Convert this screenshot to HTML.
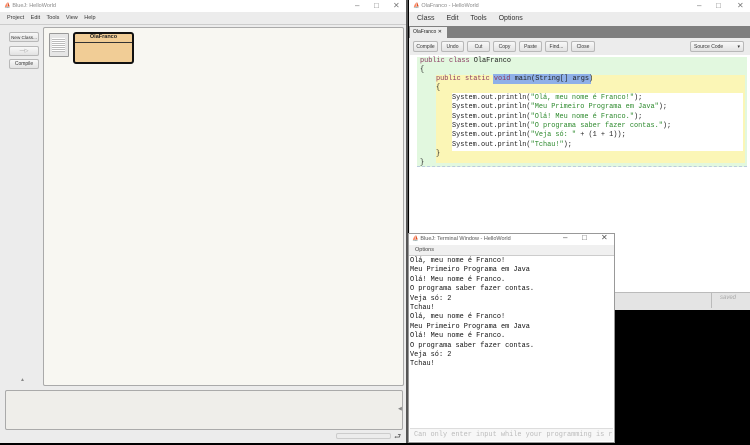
<!DOCTYPE html><html><head><style>
*{margin:0;padding:0;box-sizing:border-box}
body{width:750px;height:443px;position:relative;overflow:hidden;background:#000;font-family:"Liberation Sans",sans-serif;font-size:6px;color:#222}
.a{position:absolute;white-space:nowrap}
.btn{position:absolute;white-space:nowrap;border:1px solid #b8b8b8;background:linear-gradient(#f8f8f8,#e2e2e2);border-radius:2px;font-size:5px;text-align:center;line-height:9px;color:#333}
.mono{font-family:"Liberation Mono","DejaVu Sans Mono",monospace}
.code div{position:absolute;white-space:pre;font-size:6.9px;line-height:9.4px}
.k{color:#8b3a62}.s{color:#2d8a2d}
.ctl{position:absolute;font-size:8px;color:#777;white-space:nowrap}
</style></head><body>
<!-- left window -->
<div class="a" style="left:0;top:0;width:408px;height:443px;background:#ececec;border-right:2px solid #555"></div>
<div class="a" style="left:0;top:0;width:406px;height:12px;background:#fff"></div>
<div class="a" style="left:4px;top:3px;font-size:5.5px;color:#888">⛵ BlueJ: HelloWorld</div>
<div class="ctl" style="left:355px;top:1px">–</div><div class="ctl" style="left:374px;top:1px">□</div><div class="ctl" style="left:393px;top:1px">✕</div>
<div class="a" style="left:7px;top:15px;font-size:5.5px;color:#333;word-spacing:5px">Project Edit Tools View Help</div>
<div class="a" style="left:0;top:24px;width:406px;height:1px;background:#ccc"></div>
<div class="btn" style="left:9px;top:32px;width:30px;height:10px;font-size:4.6px">New Class...</div>
<div class="btn" style="left:9px;top:46px;width:30px;height:10px;color:#999">—▷</div>
<div class="btn" style="left:9px;top:59px;width:30px;height:10px">Compile</div>
<div class="a" style="left:20px;top:377px;font-size:5px;color:#888">▲</div>
<div class="a" style="left:43px;top:27px;width:361px;height:359px;background:#f8f7f2;border:1px solid #aaa;border-radius:2px"></div>
<div class="a" style="left:49px;top:33px;width:20px;height:24px;background:#e6e6e6;border:1px solid #999;border-radius:1px"></div>
<div class="a" style="left:52px;top:38px;width:13px;height:14px;background:repeating-linear-gradient(#fff 0 1px,#bbb 1px 2px)"></div>
<div class="a" style="left:73px;top:32px;width:61px;height:32px;background:#f1cd96;border:2px solid #111;border-radius:3px"></div>
<div class="a" style="left:75px;top:42px;width:57px;height:1px;background:#333"></div>
<div class="a" style="left:73px;top:34px;width:61px;text-align:center;font-size:5.5px;font-weight:bold">OlaFranco</div>
<div class="a" style="left:5px;top:390px;width:398px;height:40px;background:#efeeea;border:1px solid #aaa;border-radius:2px"></div>
<div class="a" style="left:398px;top:406px;font-size:5px;color:#888">◀</div>
<div class="a" style="left:336px;top:433px;width:55px;height:6px;border:1px solid #ccc;border-radius:2px"></div>
<div class="a" style="left:394px;top:431px;font-size:8px;color:#666">⮐</div>
<!-- editor window -->
<div class="a" style="left:409px;top:0;width:341px;height:310px;background:#ececec"></div>
<div class="a" style="left:409px;top:0;width:341px;height:12px;background:#fff"></div>
<div class="a" style="left:413px;top:3px;font-size:5.5px;color:#888">⛵ OlaFranco - HelloWorld</div>
<div class="ctl" style="left:697px;top:1px">–</div><div class="ctl" style="left:716px;top:1px">□</div><div class="ctl" style="left:737px;top:1px">✕</div>
<div class="a" style="left:417px;top:15px;font-size:7px;color:#333;word-spacing:10px">Class Edit Tools Options</div>
<div class="a" style="left:409px;top:26px;width:341px;height:12px;background:#7f7f7f"></div>
<div class="a" style="left:410px;top:27px;width:37px;height:11px;background:#ececec;font-size:5px;line-height:11px;padding-left:3px">OlaFranco ✕</div>
<div class="btn" style="left:413px;top:41px;width:25px;height:11px;line-height:10px">Compile</div>
<div class="btn" style="left:441px;top:41px;width:23px;height:11px;line-height:10px">Undo</div>
<div class="btn" style="left:467px;top:41px;width:23px;height:11px;line-height:10px">Cut</div>
<div class="btn" style="left:493px;top:41px;width:23px;height:11px;line-height:10px">Copy</div>
<div class="btn" style="left:519px;top:41px;width:23px;height:11px;line-height:10px">Paste</div>
<div class="btn" style="left:545px;top:41px;width:23px;height:11px;line-height:10px">Find...</div>
<div class="btn" style="left:571px;top:41px;width:24px;height:11px;line-height:10px">Close</div>
<div class="btn" style="left:690px;top:41px;width:54px;height:11px;line-height:10px;text-align:left;padding-left:3px">Source Code <span style="float:right;padding-right:3px">▾</span></div>
<div class="a" style="left:410px;top:55px;width:340px;height:237px;background:#fff"></div>
<div class="a" style="left:417px;top:57px;width:330px;height:110px;background:#e2f8df;border-bottom:1px dashed #bcd"></div>
<div class="a" style="left:436px;top:75px;width:309px;height:88px;background:#fbf6b6"></div>
<div class="a" style="left:452px;top:93px;width:291px;height:58px;background:#fff"></div>
<div class="a" style="left:493px;top:74px;width:98px;height:10px;background:#8fb0e8"></div>
<div class="code mono">
<div style="left:420px;top:57px"><span class="k">public class</span> OlaFranco</div>
<div style="left:420px;top:66px">{</div>
<div style="left:436px;top:75px"><span class="k">public static void</span> main(String[] args)</div>
<div style="left:436px;top:84px">{</div>
<div style="left:452px;top:94px">System.out.println(<span class="s">"Olá, meu nome é Franco!"</span>);</div>
<div style="left:452px;top:103px">System.out.println(<span class="s">"Meu Primeiro Programa em Java"</span>);</div>
<div style="left:452px;top:113px">System.out.println(<span class="s">"Olá! Meu nome é Franco."</span>);</div>
<div style="left:452px;top:122px">System.out.println(<span class="s">"O programa saber fazer contas."</span>);</div>
<div style="left:452px;top:131px">System.out.println(<span class="s">"Veja só: "</span> + (1 + 1));</div>
<div style="left:452px;top:141px">System.out.println(<span class="s">"Tchau!"</span>);</div>
<div style="left:436px;top:150px">}</div>
<div style="left:420px;top:159px">}</div>
</div>
<div class="a" style="left:409px;top:292px;width:341px;height:18px;background:#e4e4e4;border-top:1px solid #bbb"></div>
<div class="a" style="left:711px;top:292px;width:1px;height:16px;background:#bbb"></div>
<div class="a" style="left:720px;top:295px;font-size:6px;color:#aaa;font-style:italic">saved</div>
<!-- terminal -->
<div class="a" style="left:408px;top:233px;width:207px;height:210px;background:#fff;border:1px solid #999"></div>
<div class="a" style="left:412px;top:236px;font-size:5.5px;color:#555">⛵ BlueJ: Terminal Window - HelloWorld</div>
<div class="ctl" style="left:563px;top:233px;color:#555">–</div><div class="ctl" style="left:582px;top:233px;color:#555">□</div><div class="ctl" style="left:601px;top:233px;color:#555">✕</div>
<div class="a" style="left:409px;top:245px;width:205px;height:11px;background:#f0f0f0;border-bottom:1px solid #ccc;font-size:5.5px;line-height:11px;padding-left:6px;color:#444">Options</div>
<div class="code mono">
<div style="left:410px;top:257px;font-size:6.9px;line-height:9.4px;color:#111">Olá, meu nome é Franco!
Meu Primeiro Programa em Java
Olá! Meu nome é Franco.
O programa saber fazer contas.
Veja só: 2
Tchau!
Olá, meu nome é Franco!
Meu Primeiro Programa em Java
Olá! Meu nome é Franco.
O programa saber fazer contas.
Veja só: 2
Tchau!</div>
</div>
<div class="a" style="left:410px;top:428px;width:203px;height:13px;background:#f7f7f7;border-top:1px solid #ddd"></div>
<div class="a mono" style="left:414px;top:431px;font-size:6.9px;color:#bbb">Can only enter input while your programming is r</div>
</body></html>
